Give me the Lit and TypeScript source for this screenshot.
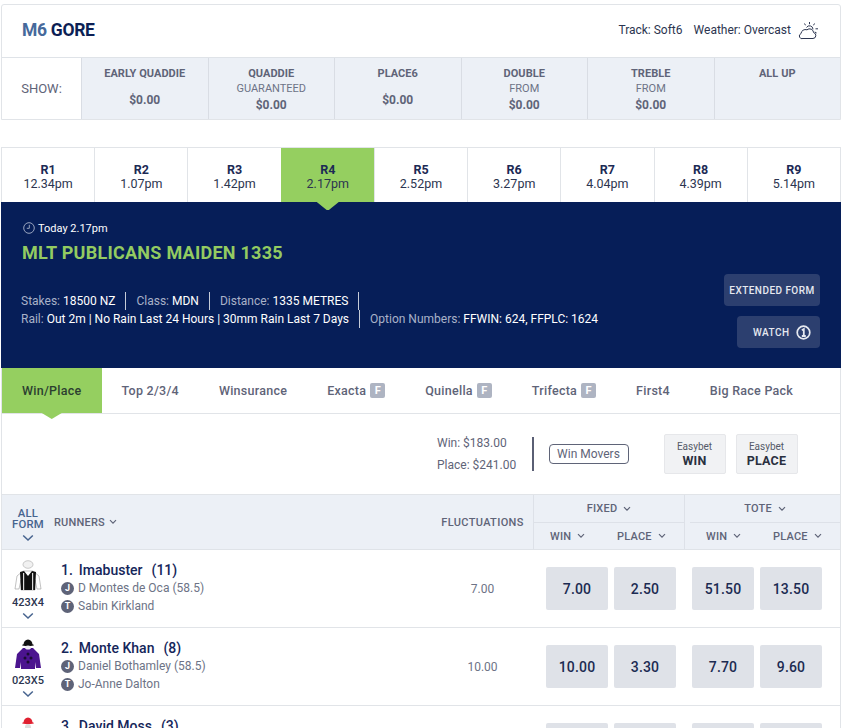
import { LitElement, html, css, svg } from "lit";
import { customElement } from "lit/decorators.js";

const chev = html`<svg class="chev" width="8" height="6" viewBox="0 0 8 6"><path d="M1 1.2 4 4.2 7 1.2" fill="none" stroke="currentColor" stroke-width="1.2"/></svg>`;
const bigChev = html`<svg class="bigchev" width="12" height="8" viewBox="0 0 12 8"><path d="M1.2 1.5 6 6 10.8 1.5" fill="none" stroke="#47648f" stroke-width="1.5"/></svg>`;

const silk1 = svg`<svg width="28" height="34" viewBox="0 0 28 34"><ellipse cx="14" cy="4.500" rx="5" ry="3.800" fill="#f1f1f1" stroke="#aaa" stroke-width=".6"/><path d="M9 11 L19 11 L25 16 L27 29 L23 29 L21 20 L21 30 L7 30 L7 20 L5 29 L1 29 L3 16Z" fill="#fff" stroke="#999" stroke-width=".6"/><path d="M6 12 L10 11 L14 16 L18 11 L22 12 L21 30 L7 30Z" fill="#111"/><rect x="9" y="13" width="1.200" height="17" fill="#ddd"/><rect x="18" y="13" width="1.200" height="17" fill="#ddd"/></svg>`;
const silk2 = svg`<svg width="28" height="34" viewBox="0 0 28 34"><path d="M9.500 7 A4.500 5.500 0 0 1 18.500 7 Z" fill="#111"/><ellipse cx="14" cy="7" rx="6" ry="1.200" fill="#111"/><path d="M9 10 L19 10 L25 16 L27 30 L22 30 L21 24 L21 31 L7 31 L7 24 L6 30 L1 30 L3 16Z" fill="#4b148f"/><ellipse cx="14" cy="9.500" rx="3" ry="2" fill="#f0edf4"/><g fill="#1a0b33"><circle cx="14" cy="16" r="1.500"/><circle cx="11" cy="20" r="1.500"/><circle cx="17" cy="20" r="1.500"/><circle cx="14" cy="24" r="1.500"/></g></svg>`;
const silk3 = svg`<svg width="28" height="34" viewBox="0 0 28 34"><path d="M9.500 7 A4.500 5.500 0 0 1 18.500 7 Z" fill="#e02030"/><ellipse cx="14" cy="7" rx="6" ry="1.200" fill="#e02030"/><circle cx="14" cy="11" r="3" fill="#ddd"/></svg>`;

const pools = [
  { t: "EARLY QUADDIE", v: "$0.00" },
  { t: "QUADDIE", s: "GUARANTEED", v: "$0.00" },
  { t: "PLACE6", v: "$0.00" },
  { t: "DOUBLE", s: "FROM", v: "$0.00" },
  { t: "TREBLE", s: "FROM", v: "$0.00" },
  { t: "ALL UP" },
];
const races = [["R1","12.34pm"],["R2","1.07pm"],["R3","1.42pm"],["R4","2.17pm"],["R5","2.52pm"],["R6","3.27pm"],["R7","4.04pm"],["R8","4.39pm"],["R9","5.14pm"]];
const tabs: [string, boolean][] = [["Win/Place",false],["Top 2/3/4",false],["Winsurance",false],["Exacta",true],["Quinella",true],["Trifecta",true],["First4",false],["Big Race Pack",false]];
const runners = [
  { n: "1.", name: "Imabuster", b: "(11)", form: "423X4", j: "D Montes de Oca (58.5)", tr: "Sabin Kirkland", fl: "7.00", o: ["7.00","2.50","51.50","13.50"], silk: silk1 },
  { n: "2.", name: "Monte Khan", b: "(8)", form: "023X5", j: "Daniel Bothamley (58.5)", tr: "Jo-Anne Dalton", fl: "10.00", o: ["10.00","3.30","7.70","9.60"], silk: silk2 },
  { n: "3.", name: "David Moss", b: "(3)", form: "", j: "", tr: "", fl: "", o: ["","","",""], silk: silk3 },
];

@customElement("app-root")
export class AppRoot extends LitElement {
  static styles = css`
    :host { display: block; height: 728px; overflow: hidden; background: #fff; font-family: Roboto, "Liberation Sans", sans-serif; color: #5f6478; font-size: 12px; }
    .wrap { width: 840px; margin-left: 1px; padding-top: 4px; }
    .card { border: 1px solid #e1e4e8; border-radius: 3px 3px 0 0; }
    .head { height: 52px; display: flex; align-items: center; justify-content: space-between; padding: 0 21px 2px 20px; box-sizing: border-box; }
    .title { font-size: 17.500px; font-weight: 700; color: #0c1f55; letter-spacing: -.3px; }
    .title span { color: #46699b; }
    .cond { display: flex; align-items: center; font-size: 12px; color: #2c3550; }
    .cond span { margin-right: 11px; }
    .cond svg { margin-left: -4px; }
    .show { display: flex; height: 62px; box-sizing: border-box; border-top: 1px solid #dfe3e8; }
    .label { width: 79px; display: flex; align-items: center; justify-content: center; font-size: 13px; color: #5f6478; }
    .pool { flex: 1; background: #ecf0f6; border-left: 1px solid #d9dde4; display: flex; flex-direction: column; align-items: center; padding-top: 9px; box-sizing: border-box; }
    .pool .t { font-size: 11px; font-weight: 700; line-height: 13px; color: #5f6478; letter-spacing: .05px; }
    .pool .s { font-size: 11px; line-height: 16px; margin-top: 1px; color: #6d7386; }
    .pool .v { font-size: 12px; font-weight: 700; color: #5f6478; line-height: 16px; }
    .pool.nosub .v { margin-top: 12px; }
    .races { display: flex; margin-top: 27px; border: 1px solid #e1e4e8; border-bottom: 0; height: 55px; box-sizing: border-box; }
    .race { flex: 1; border-left: 1px solid #e1e4e8; display: flex; flex-direction: column; align-items: center; justify-content: center; font-size: 12.500px; color: #2c3550; line-height: 14px; padding-top: 4px; box-sizing: border-box; position: relative; }
    .race:first-child { border-left: 0; }
    .race b { font-size: 12.500px; font-weight: 700; color: #1c2a55; }
    .race.on { background: #95cf60; border-left-color: transparent; }
    .race.on::after { content: ""; position: absolute; left: 50%; bottom: -8px; margin-left: -11px; width: 22px; height: 8px; background: #95cf60; clip-path: polygon(0 0, 100% 0, 55% 100%, 45% 100%); z-index: 2; }
    .info { background: #061e58; height: 166px; box-sizing: border-box; padding: 19px 21px 0 21px; position: relative; color: #fff; display: flex; flex-direction: column; }
    .today { font-size: 11px; display: flex; align-items: center; gap: 3px; height: 14px; margin-left: 1px; }
    .rname { font-size: 18px; font-weight: 700; color: #93cb61; margin-top: 7px; letter-spacing: .26px; line-height: 22px; }
    .meta { margin-top: 28px; margin-left: -1px; font-size: 12px; line-height: 18px; color: #fff; }
    .meta i { font-style: normal; color: #a9b2c8; }
    .line { display: flex; align-items: center; height: 18px; }
    .sep { width: 1px; height: 18px; background: #c5cbd8; margin: 0 10px; }
    .btns { position: absolute; right: 21px; top: 72px; display: flex; flex-direction: column; align-items: flex-end; gap: 10px; }
    .btn { background: #2c3f6f; border-radius: 4px; height: 32px; width: 96px; display: flex; align-items: center; justify-content: center; box-sizing: border-box; font-size: 10px; font-weight: 500; letter-spacing: .45px; color: #e6e9f0; white-space: nowrap; }
    .btn.w { width: 83px; justify-content: flex-start; padding-left: 16px; gap: 7px; }
    .tabs { display: flex; height: 46px; box-sizing: border-box; border-left: 1px solid #e1e4e8; border-right: 1px solid #e1e4e8; border-bottom: 1px solid #e1e4e8; align-items: stretch; }
    .tab { display: flex; align-items: center; font-size: 12.500px; font-weight: 500; color: #5f6478; padding: 0 20px; gap: 4px; white-space: nowrap; position: relative; letter-spacing: .26px; }
    .tab.on { background: #95cf60; color: #2c3f30; }
    .tab.on::after { content: ""; position: absolute; left: 50%; bottom: -6px; margin-left: -10px; width: 20px; height: 6px; background: #95cf60; clip-path: polygon(0 0, 100% 0, 50% 100%); }
    .f { width: 15px; height: 15px; border-radius: 2px; background: #aeb4c2; color: #fff; font-size: 11px; font-weight: 700; display: inline-flex; align-items: center; justify-content: center; letter-spacing: 0; }
    .pools { height: 81px; box-sizing: border-box; display: flex; align-items: center; border-left: 1px solid #e1e4e8; border-right: 1px solid #e1e4e8; border-bottom: 1px solid #e1e4e8; }
    .tot { margin-left: 435px; width: 95px; font-size: 12px; line-height: 22px; color: #5f6478; margin-top: -1px; }
    .vbar { width: 1.500px; height: 34px; background: #5a5f74; margin-top: -1px; }
    .mov { margin-left: 15px; border: 1px solid #5f6478; border-radius: 4px; height: 20px; width: 80px; box-sizing: border-box; display: flex; align-items: center; justify-content: center; font-size: 12px; color: #5f6478; margin-top: -1px; }
    .ez { width: 62px; height: 40px; background: #f1f2f4; border: 1px solid #e6e7ea; box-sizing: border-box; border-radius: 2px; display: flex; flex-direction: column; align-items: center; justify-content: center; font-size: 10px; color: #555a68; line-height: 13px; margin-top: -1px; }
    .ez b { font-size: 12.500px; font-weight: 700; color: #2a3040; line-height: 15px; letter-spacing: .2px; }
    .ez.a { margin-left: 35px; }
    .ez.b { margin-left: 10px; }
    .thead { height: 55px; box-sizing: border-box; background: #ecf0f6; display: flex; border-left: 1px solid #e1e4e8; border-right: 1px solid #e1e4e8; border-bottom: 1px solid #dfe3e8; color: #5f6478; font-size: 11px; font-weight: 500; letter-spacing: .2px; }
    .allform { width: 52px; color: #47648f; font-size: 11.300px; line-height: 10.500px; text-align: center; padding-top: 14px; box-sizing: border-box; font-weight: 500; display: flex; flex-direction: column; align-items: center; }
    .bigchev { margin-top: 4px; }
    .rn { width: 387px; display: flex; align-items: center; gap: 4px; }
    .fl { width: 93px; display: flex; align-items: center; justify-content: center; font-weight: 500; border-right: 1px solid #dde1e8; box-sizing: border-box; padding-right: 9px; letter-spacing: .35px; white-space: nowrap; }
    .grp { width: 150px; display: flex; flex-direction: column; }
    .grp + .grp { width: 156px; box-sizing: border-box; border-left: 1px solid #dde1e8; }
    .g1 { height: 28px; box-sizing: border-box; display: flex; align-items: center; justify-content: center; gap: 6px; border-bottom: 1px solid #dde1e8; }
    .grp + .grp .g1 { margin-left: 5px; }
    .g2 { flex: 1; display: flex; align-items: center; padding-left: 16px; }
    .grp + .grp .g2 { padding-left: 21px; }
    .g2 span { display: flex; align-items: center; gap: 6px; width: 68px; }
    .row { height: 77px; display: flex; border-left: 1px solid #e1e4e8; border-right: 1px solid #e1e4e8; border-bottom: 1px solid #e1e4e8; }
    .sf { width: 52px; display: flex; flex-direction: column; align-items: center; padding-top: 10px; box-sizing: border-box; }
    .sf .form { font-size: 11px; color: #2c3550; font-weight: 500; line-height: 13px; margin-top: 2px; }
    .sf .bigchev { margin-top: 3px; }
    .who { width: 387px; padding: 12px 0 0 7px; box-sizing: border-box; }
    .nm { font-size: 14px; font-weight: 500; color: #15265a; line-height: 17px; display: flex; }
    .nm .i { margin-right: 6px; }
    .nm .b { margin-left: 9px; }
    .pp { display: flex; align-items: center; gap: 4px; font-size: 12px; line-height: 18px; color: #6d7386; }
    .dot { width: 13px; height: 13px; border-radius: 50%; background: #5e6378; color: #fff; font-size: 9px; font-weight: 700; display: inline-flex; align-items: center; justify-content: center; }
    .flv { width: 93px; display: flex; align-items: center; justify-content: center; font-size: 12px; color: #6d7386; padding-right: 10px; box-sizing: border-box; }
    .odds { display: flex; align-items: center; gap: 6px; padding-left: 12px; }
    .odds.t { padding-left: 16px; }
    .o { width: 62px; height: 43px; border-radius: 2px; background: #dfe2e8; color: #1c2b52; font-size: 14px; font-weight: 500; display: flex; align-items: center; justify-content: center; letter-spacing: .2px; }
    .row.r3 { border-bottom: 0; }
  `;

  render() {
    return html`<div class="wrap">
      <div class="card">
        <div class="head">
          <div class="title"><span>M6</span> GORE</div>
          <div class="cond"><span>Track: Soft6</span><span>Weather: Overcast</span>
            <svg width="21" height="19" viewBox="0 0 21 19" fill="none" stroke="#2c3550" stroke-width="1"><path d="M5 17.500h10a3 3 0 0 0 .6-5.900 4 4 0 0 0-6.600-2.800A4.500 4.500 0 0 0 3 12.600 2.600 2.600 0 0 0 5 17.500Z"/><path d="M8.500 6.500a3.500 3.500 0 0 1 6.500 1.800M11.500 1v2.200M6.500 2.500l1 1.800M16.500 2.500l-1 1.800M17.500 7.800h2.500M16.800 11l1.800 1"/></svg>
          </div>
        </div>
        <div class="show">
          <div class="label">SHOW:</div>
          ${pools.map(p => html`<div class="pool ${p.s ? "" : "nosub"}"><div class="t">${p.t}</div>${p.s ? html`<div class="s">${p.s}</div>` : ""}${p.v ? html`<div class="v">${p.v}</div>` : ""}</div>`)}
        </div>
      </div>
      <div class="races">
        ${races.map((r, i) => html`<div class="race ${i === 3 ? "on" : ""}"><b>${r[0]}</b>${r[1]}</div>`)}
      </div>
      <div class="info">
        <div class="today"><svg width="12" height="12" viewBox="0 0 12 12" fill="none" stroke="#9aa5bf" stroke-width="1"><circle cx="6" cy="6" r="5.300"/><path d="M6.300 2.800v3.500H3.800"/></svg><span>Today 2.17pm</span></div>
        <div class="rname">MLT PUBLICANS MAIDEN 1335</div>
        <div class="meta">
          <div class="line"><span><i>Stakes:</i> 18500 NZ</span><span class="sep"></span><span><i>Class:</i> MDN</span><span class="sep"></span><span><i>Distance:</i> 1335 METRES</span><span class="sep"></span></div>
          <div class="line"><span><i>Rail:</i> Out 2m | No Rain Last 24 Hours | 30mm Rain Last 7 Days</span><span class="sep"></span><span><i>Option Numbers:</i> FFWIN: 624, FFPLC: 1624</span></div>
        </div>
        <div class="btns">
          <div class="btn">EXTENDED FORM</div>
          <div class="btn w">WATCH <svg width="15" height="15" viewBox="0 0 15 15" fill="none"><circle cx="7.500" cy="7.500" r="6.300" stroke="#e6e9f0" stroke-width="1.700"/><path d="M5.800 5.200l2-1.200V10.500M5.800 11h4" stroke="#e6e9f0" stroke-width="1.800"/></svg></div>
        </div>
      </div>
      <div class="tabs">
        ${tabs.map((t, i) => html`<div class="tab ${i === 0 ? "on" : ""}">${t[0]}${t[1] ? html`<span class="f">F</span>` : ""}</div>`)}
      </div>
      <div class="pools">
        <div class="tot">Win: $183.00<br />Place: $241.00</div>
        <div class="vbar"></div>
        <div class="mov">Win Movers</div>
        <div class="ez a">Easybet<b>WIN</b></div>
        <div class="ez b">Easybet<b>PLACE</b></div>
      </div>
      <div class="thead">
        <div class="allform">ALL<br />FORM${bigChev}</div>
        <div class="rn">RUNNERS ${chev}</div>
        <div class="fl">FLUCTUATIONS</div>
        <div class="grp"><div class="g1">FIXED ${chev}</div><div class="g2"><span>WIN ${chev}</span><span>PLACE ${chev}</span></div></div>
        <div class="grp"><div class="g1">TOTE ${chev}</div><div class="g2"><span>WIN ${chev}</span><span>PLACE ${chev}</span></div></div>
      </div>
      ${runners.map((r, i) => html`<div class="row r${i + 1}">
        <div class="sf">${r.silk}${r.form ? html`<div class="form">${r.form}</div>${bigChev}` : ""}</div>
        <div class="who">
          <div class="nm"><span class="i">${r.n}</span><span>${r.name}</span><span class="b">${r.b}</span></div>
          ${r.j ? html`<div class="pp"><span class="dot">J</span>${r.j}</div><div class="pp"><span class="dot">T</span>${r.tr}</div>` : ""}
        </div>
        <div class="flv">${r.fl}</div>
        <div class="odds"><div class="o">${r.o[0]}</div><div class="o">${r.o[1]}</div></div>
        <div class="odds t"><div class="o">${r.o[2]}</div><div class="o">${r.o[3]}</div></div>
      </div>`)}
    </div>`;
  }
}
